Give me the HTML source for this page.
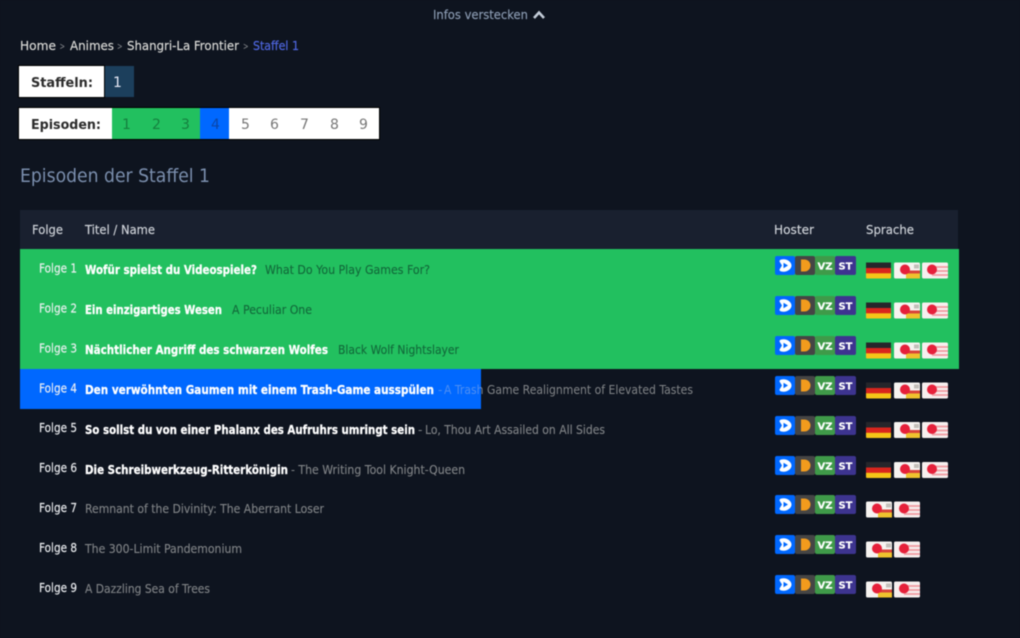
<!DOCTYPE html>
<html lang="de"><head><meta charset="utf-8"><title>Shangri-La Frontier – Staffel 1</title>
<style>
html,body{margin:0;padding:0;background:#0e141f;width:1020px;height:638px;overflow:hidden}
svg{display:block;filter:blur(.5px)}
text{font-family:"DejaVu Sans","Liberation Sans",sans-serif;font-size:12px}
.b{font-weight:700}
.f{fill:#eef0f3;stroke:#eef0f3;stroke-width:.15}
.w{fill:#fff;stroke:#fff;stroke-width:.25;font-weight:700}
.g{fill:#818487;stroke:#818487;stroke-width:.12}
.gs{fill:#12693a;stroke:#12693a;stroke-width:.12}
.h{fill:#d0d4da;stroke:#d0d4da;stroke-width:.15}
.i{fill:#fff;font-weight:700;font-size:10px;stroke:#fff;stroke-width:.2}
.c{fill:#dcdcd9;stroke:#dcdcd9;stroke-width:.15}
.a{fill:#85888c;font-size:10px}
.n{font-size:14px}
</style></head><body>
<svg width="1020" height="638" viewBox="0 0 1020 638" xmlns="http://www.w3.org/2000/svg">
<defs>
<linearGradient id="split" gradientUnits="userSpaceOnUse" x1="444" y1="0" x2="693" y2="0">
<stop offset="0.149" stop-color="#4f8ff2"/>
<stop offset="0.149" stop-color="#818487"/>
</linearGradient>
<g id="host">
<rect x="0" y="0" width="20" height="19" rx="2" fill="#0068ff"/>
<path d="M4.5 5.5Q4.5 4 6 3.6C11 2 16.5 5.5 16.5 9.5C16.5 13.5 11 17 6 15.4Q4.5 15 4.5 13.5L7 9.5Z" fill="#fff"/>
<path d="M8.5 6.8L13 9.5L8.5 12.2Z" fill="#0068ff"/>
<rect x="20" y="0" width="20" height="19" rx="2" fill="#454545"/>
<path d="M26 3.5h3.5a6 6 0 0 1 0 12H26Z" fill="#f29b1d"/>
<rect x="40" y="0" width="20" height="19" rx="2" fill="#3f9a49"/>
<text class="i" x="42.5" y="13.5" textLength="15" lengthAdjust="spacingAndGlyphs">VZ</text>
<rect x="60" y="0" width="21" height="19" rx="2" fill="#3d348f"/>
<text class="i" x="63.5" y="13.5" textLength="14" lengthAdjust="spacingAndGlyphs">ST</text>
</g>
<g id="de">
<rect width="25" height="16" rx="1" fill="#f5c518"/>
<rect width="25" height="5.5" fill="#26262b"/>
<rect y="5.5" width="25" height="5.3" fill="#d9251d"/>
</g>
<g id="jd">
<rect width="26" height="16" rx="1.5" fill="#f6f3f0"/>
<path d="M14 8h12v3H14Z" fill="#d9453a"/>
<path d="M12 11h14v5H12Z" fill="#efc22e"/>
<path d="M20 2h5v4h-5Z" fill="#c4bfb9"/>
<circle cx="11" cy="7" r="5" fill="#e6203a"/>
</g>
<g id="je">
<rect width="26" height="16" rx="1.5" fill="#f7efee"/>
<path d="M13 3.5h13v2H13ZM13 7.5h13v2H13ZM10 11.5h16v2H10Z" fill="#f0a3a8"/>
<circle cx="10" cy="7" r="5" fill="#e6203a"/>
</g>
</defs>

<rect width="1020" height="638" fill="#0e141f"/>

<!-- top toggle -->
<text x="433" y="19" fill="#8c9cb3" stroke="#8c9cb3" stroke-width=".15" textLength="95" lengthAdjust="spacingAndGlyphs">Infos verstecken</text>
<path d="M534 18L539 12.5L544 18" fill="none" stroke="#c3ccd8" stroke-width="2.6"/>

<!-- breadcrumb -->
<text class="c" x="20" y="50" textLength="36" lengthAdjust="spacingAndGlyphs">Home</text>
<text class="a" x="59.5" y="49.5" textLength="5.5" lengthAdjust="spacingAndGlyphs">&gt;</text>
<text class="c" x="70" y="50" textLength="44" lengthAdjust="spacingAndGlyphs">Animes</text>
<text class="a" x="117" y="49.5" textLength="5.5" lengthAdjust="spacingAndGlyphs">&gt;</text>
<text class="c" x="127" y="50" textLength="112" lengthAdjust="spacingAndGlyphs">Shangri-La Frontier</text>
<text class="a" x="243" y="49.5" textLength="5.5" lengthAdjust="spacingAndGlyphs">&gt;</text>
<text x="253" y="50" fill="#4f67e0" stroke="#4f67e0" stroke-width=".2" textLength="46" lengthAdjust="spacingAndGlyphs">Staffel 1</text>

<!-- Staffeln -->
<rect x="18" y="65" width="87" height="33" fill="#000"/>
<rect x="19" y="66" width="85" height="31" fill="#fff"/>
<text class="b" x="31" y="87" fill="#2c2c2c" style="font-size:13px" textLength="62" lengthAdjust="spacingAndGlyphs">Staffeln:</text>
<rect x="105" y="66" width="29" height="31" fill="#1c3f5c"/>
<text class="n" x="113" y="87" fill="#e6e8f5">1</text>

<!-- Episoden -->
<rect x="18" y="107" width="362" height="33" fill="#000"/>
<rect x="19" y="108" width="360" height="31" fill="#fff"/>
<text class="b" x="31" y="129" fill="#2c2c2c" style="font-size:13px" textLength="70" lengthAdjust="spacingAndGlyphs">Episoden:</text>
<rect x="112" y="108" width="88" height="31" fill="#22c05f"/>
<rect x="200" y="108" width="29" height="31" fill="#0068ff"/>
<text class="n" x="122" y="129" fill="#15803f">1</text>
<text class="n" x="152" y="129" fill="#15803f">2</text>
<text class="n" x="181" y="129" fill="#15803f">3</text>
<text class="n" x="211" y="129" fill="#0b46a8">4</text>
<text class="n" x="241" y="129" fill="#777">5</text>
<text class="n" x="270" y="129" fill="#777">6</text>
<text class="n" x="300" y="129" fill="#777">7</text>
<text class="n" x="330" y="129" fill="#777">8</text>
<text class="n" x="359" y="129" fill="#777">9</text>

<!-- Heading -->
<text x="20" y="182" fill="#7b8fae" style="font-size:19px" textLength="190" lengthAdjust="spacingAndGlyphs">Episoden der Staffel 1</text>

<!-- Table header -->
<rect x="20" y="210" width="938" height="39" fill="#19202f"/>
<text class="h" x="32" y="234" textLength="31" lengthAdjust="spacingAndGlyphs">Folge</text>
<text class="h" x="85" y="234" textLength="70" lengthAdjust="spacingAndGlyphs">Titel / Name</text>
<text class="h" x="774" y="234" textLength="40" lengthAdjust="spacingAndGlyphs">Hoster</text>
<text class="h" x="866" y="234" textLength="48" lengthAdjust="spacingAndGlyphs">Sprache</text>

<!-- Status rows -->
<rect x="20" y="249" width="939" height="120" fill="#22c05f"/>
<rect x="20" y="369" width="461" height="40" fill="#0068ff"/>

<!-- Rows -->
<text class="f" x="39" y="272.5" textLength="38" lengthAdjust="spacingAndGlyphs">Folge 1</text>
<text class="w" x="85" y="274" textLength="172" lengthAdjust="spacingAndGlyphs">Wofür spielst du Videospiele?</text>
<text class="gs" x="265" y="274" textLength="165" lengthAdjust="spacingAndGlyphs">What Do You Play Games For?</text>

<text class="f" x="39" y="312.5" textLength="38" lengthAdjust="spacingAndGlyphs">Folge 2</text>
<text class="w" x="85" y="314" textLength="137" lengthAdjust="spacingAndGlyphs">Ein einzigartiges Wesen</text>
<text class="gs" x="232" y="314" textLength="80" lengthAdjust="spacingAndGlyphs">A Peculiar One</text>

<text class="f" x="39" y="352.5" textLength="38" lengthAdjust="spacingAndGlyphs">Folge 3</text>
<text class="w" x="85" y="354" textLength="243" lengthAdjust="spacingAndGlyphs">Nächtlicher Angriff des schwarzen Wolfes</text>
<text class="gs" x="338" y="354" textLength="121" lengthAdjust="spacingAndGlyphs">Black Wolf Nightslayer</text>

<text class="f" x="39" y="392.5" textLength="38" lengthAdjust="spacingAndGlyphs">Folge 4</text>
<text class="w" x="85" y="394" textLength="349" lengthAdjust="spacingAndGlyphs">Den verwöhnten Gaumen mit einem Trash-Game ausspülen</text>
<text x="438" y="394" fill="#4b8df0">-</text>
<text x="444" y="394" fill="url(#split)" textLength="249" lengthAdjust="spacingAndGlyphs">A Trash Game Realignment of Elevated Tastes</text>

<text class="f" x="39" y="432" textLength="38" lengthAdjust="spacingAndGlyphs">Folge 5</text>
<text class="w" x="85" y="434" textLength="330" lengthAdjust="spacingAndGlyphs">So sollst du von einer Phalanx des Aufruhrs umringt sein</text>
<text class="g" x="418" y="434">-</text>
<text class="g" x="425" y="434" textLength="180" lengthAdjust="spacingAndGlyphs">Lo, Thou Art Assailed on All Sides</text>

<text class="f" x="39" y="472" textLength="38" lengthAdjust="spacingAndGlyphs">Folge 6</text>
<text class="w" x="85" y="474" textLength="203" lengthAdjust="spacingAndGlyphs">Die Schreibwerkzeug-Ritterkönigin</text>
<text class="g" x="291" y="474" textLength="174" lengthAdjust="spacingAndGlyphs">- The Writing Tool Knight-Queen</text>

<text class="f" x="39" y="512" textLength="38" lengthAdjust="spacingAndGlyphs">Folge 7</text>
<text class="g" x="85" y="513" textLength="239" lengthAdjust="spacingAndGlyphs">Remnant of the Divinity: The Aberrant Loser</text>

<text class="f" x="39" y="552" textLength="38" lengthAdjust="spacingAndGlyphs">Folge 8</text>
<text class="g" x="85" y="553" textLength="157" lengthAdjust="spacingAndGlyphs">The 300-Limit Pandemonium</text>

<text class="f" x="39" y="592" textLength="38" lengthAdjust="spacingAndGlyphs">Folge 9</text>
<text class="g" x="85" y="593" textLength="125" lengthAdjust="spacingAndGlyphs">A Dazzling Sea of Trees</text>

<!-- Hoster icons -->
<use href="#host" x="775" y="256"/>
<use href="#host" x="775" y="296"/>
<use href="#host" x="775" y="336"/>
<use href="#host" x="775" y="376"/>
<use href="#host" x="775" y="416"/>
<use href="#host" x="775" y="456"/>
<use href="#host" x="775" y="495"/>
<use href="#host" x="775" y="535"/>
<use href="#host" x="775" y="575"/>

<!-- Flags -->
<use href="#de" x="866" y="262.5"/><use href="#jd" x="894" y="262.5"/><use href="#je" x="922" y="262.5"/>
<use href="#de" x="866" y="302.5"/><use href="#jd" x="894" y="302.5"/><use href="#je" x="922" y="302.5"/>
<use href="#de" x="866" y="342.5"/><use href="#jd" x="894" y="342.5"/><use href="#je" x="922" y="342.5"/>
<use href="#de" x="866" y="382.5"/><use href="#jd" x="894" y="382.5"/><use href="#je" x="922" y="382.5"/>
<use href="#de" x="866" y="422"/><use href="#jd" x="894" y="422"/><use href="#je" x="922" y="422"/>
<use href="#de" x="866" y="462"/><use href="#jd" x="894" y="462"/><use href="#je" x="922" y="462"/>
<use href="#jd" x="866" y="501.5"/><use href="#je" x="894" y="501.5"/>
<use href="#jd" x="866" y="541.5"/><use href="#je" x="894" y="541.5"/>
<use href="#jd" x="866" y="581.5"/><use href="#je" x="894" y="581.5"/>
</svg>
</body></html>
